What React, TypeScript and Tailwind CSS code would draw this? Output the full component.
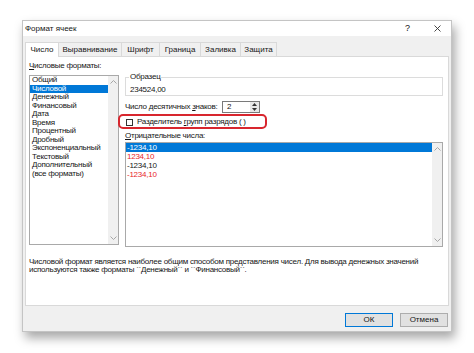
const formats = [
  'Общий',
  'Числовой',
  'Денежный',
  'Финансовый',
  'Дата',
  'Время',
  'Процентный',
  'Дробный',
  'Экспоненциальный',
  'Текстовый',
  'Дополнительный',
  '(все форматы)',
]

const negatives = [
  { text: '-1234,10', red: false },
  { text: '1234,10', red: true },
  { text: '-1234,10', red: false },
  { text: '-1234,10', red: true },
]

const tabs = [
  { label: 'Выравнивание', w: 'w-[64px]' },
  { label: 'Шрифт', w: 'w-[39px]' },
  { label: 'Граница', w: 'w-[42px]' },
  { label: 'Заливка', w: 'w-[41px]' },
  { label: 'Защита', w: 'w-[37px]' },
]

function Chevron({ up }: { up?: boolean }) {
  return (
    <svg width="7" height="4" viewBox="0 0 7 4">
      <polyline
        points={up ? '0.5,3.5 3.5,0.5 6.5,3.5' : '0.5,0.5 3.5,3.5 6.5,0.5'}
        fill="none"
        stroke="#a6a6a6"
        strokeWidth="1"
      />
    </svg>
  )
}

function ScrollBar() {
  return (
    <div className="w-[10px] h-full bg-[#f0f0f0] flex flex-col items-center justify-between py-[4px]">
      <Chevron up />
      <Chevron />
    </div>
  )
}

export default function App() {
  return (
    <div className="w-[474px] h-[353px] bg-white pt-[20px] pl-[22px] font-['Liberation_Sans',Arial,sans-serif] text-[#161616]">
      <div className="w-[430px] h-[312px] bg-[#f0f0f0] border border-[#c4c4c4] shadow-[3px_6px_10px_rgba(0,0,0,0.35)] flex flex-col">
        {/* Title bar */}
        <div className="h-[15px] bg-white flex items-center pl-[2px] pr-[10px] shrink-0">
          <span className="flex-1 text-[8px] leading-none">Формат ячеек</span>
          <span className="text-[9px] leading-none mr-[24px]">?</span>
          <svg width="7" height="7" viewBox="0 0 7 7">
            <path d="M0.5 0.5 L6.5 6.5 M6.5 0.5 L0.5 6.5" stroke="#333" strokeWidth="0.9" />
          </svg>
        </div>

        {/* Tabs */}
        <div className="flex items-end pl-[2px] pt-[6px] shrink-0">
          <div className="relative z-10 w-[34px] h-[15px] -mb-px bg-white border border-b-0 border-[#d9d9d9] flex items-center justify-center text-[8px] leading-none">
            Число
          </div>
          {tabs.map((t) => (
            <div
              key={t.label}
              className={`${t.w} -ml-px h-[14px] bg-[#f0f0f0] border border-b-0 border-[#d9d9d9] flex items-center justify-center text-[8px] leading-none`}
            >
              {t.label}
            </div>
          ))}
        </div>

        {/* Page */}
        <div className="mx-[2px] h-[250px] bg-white border border-[#d9d9d9] pt-[2px] pl-[3px] text-[8px] tracking-[-0.25px] shrink-0">
          <div className="flex">
            {/* Left column */}
            <div className="w-[90px]">
              <div className="h-[14px] leading-[14px]">
                <span className="underline">Ч</span>исловые форматы:
              </div>
              <div className="mt-[2px] h-[170px] border border-[#a9a9a9] flex">
                <div className="flex-1 leading-[8.5px]">
                  {formats.map((f, i) => (
                    <div
                      key={f}
                      className={i === 1 ? 'bg-[#0078d7] text-white pl-[2px]' : 'pl-[2px]'}
                    >
                      {f}
                    </div>
                  ))}
                </div>
                <ScrollBar />
              </div>
            </div>

            {/* Right column */}
            <div className="ml-[6px] w-[318px]">
              <fieldset className="mt-[13px] border border-[#dcdcdc] px-[3px] pt-[3px]">
                <legend className="px-[1px] leading-[10px]">Образец</legend>
                <div className="leading-[10px] pl-[1px]">234524,00</div>
              </fieldset>

              <div className="mt-[5px] h-[12px] flex items-center">
                <span className="w-[97px] whitespace-nowrap">
                  Число десятичных <span className="underline">з</span>наков:
                </span>
                <div className="w-[38px] h-[12px] border border-[#7a7a7a] flex items-center">
                  <span className="flex-1 pl-[4px] leading-none">2</span>
                  <div className="w-[9px] h-full bg-[#e8e8e8] flex flex-col items-center justify-around">
                    <svg width="5" height="3" viewBox="0 0 5 3">
                      <polygon points="0,3 2.5,0 5,3" fill="#333" />
                    </svg>
                    <svg width="5" height="3" viewBox="0 0 5 3">
                      <polygon points="0,0 2.5,3 5,0" fill="#333" />
                    </svg>
                  </div>
                </div>
              </div>

              <div className="relative mt-[4px] h-[10px] flex items-center">
                <span className="w-[7px] h-[7px] ml-[1px] border border-[#333] bg-white" />
                <span className="ml-[4px] leading-none whitespace-nowrap">
                  Разделитель <span className="underline">г</span>рупп разрядов ( )
                </span>
                <div className="absolute left-[-7px] top-[-3px] w-[149px] h-[15px] border-2 border-[#d8262e] rounded-[5px]" />
              </div>

              <div className="mt-[4px] h-[10px] leading-[10px]">
                <span className="underline">О</span>трицательные числа:
              </div>

              <div className="mt-[1px] h-[105px] border border-[#a9a9a9] flex">
                <div className="flex-1 leading-[9px]">
                  {negatives.map((n, i) => (
                    <div
                      key={i}
                      className={
                        i === 0
                          ? 'bg-[#0078d7] text-white pl-[1px]'
                          : n.red
                            ? 'text-[#e8262b] pl-[1px]'
                            : 'pl-[1px]'
                      }
                    >
                      {n.text}
                    </div>
                  ))}
                </div>
                <ScrollBar />
              </div>
            </div>
          </div>

          <div className="mt-[11px] leading-[8px] whitespace-nowrap">
            <div>
              Числовой формат является наиболее общим способом представления чисел. Для вывода денежных значений
            </div>
            <div>используются также форматы ``Денежный`` и ``Финансовый``.</div>
          </div>
        </div>

        {/* Footer */}
        <div className="flex-1 flex items-start justify-end gap-[7px] pt-[7px] pr-[3px]">
          <button className="w-[48px] h-[14px] border border-[#0078d7] bg-[#e1e1e1] text-[8px] leading-none">
            ОК
          </button>
          <button className="w-[48px] h-[14px] border border-[#adadad] bg-[#e1e1e1] text-[8px] leading-none">
            Отмена
          </button>
        </div>
      </div>
    </div>
  )
}
